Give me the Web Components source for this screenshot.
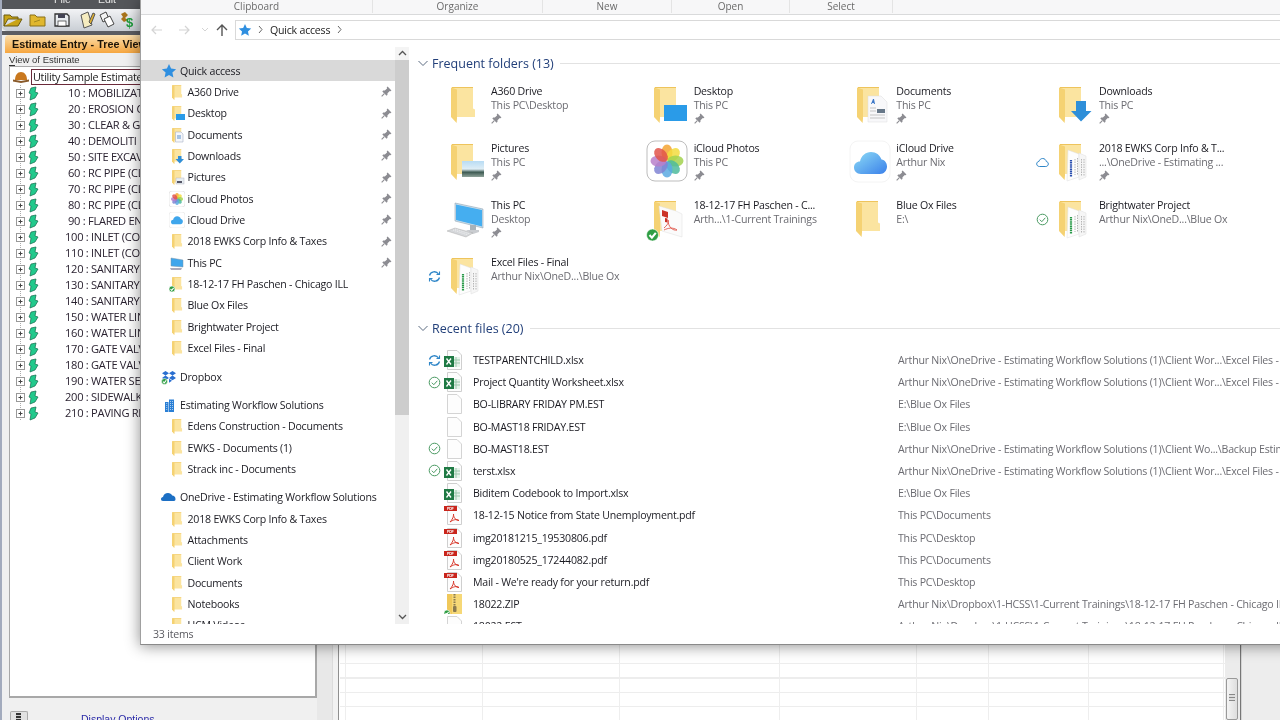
<!DOCTYPE html>
<html><head><meta charset="utf-8"><title>Quick access</title>
<style>
html,body{margin:0;width:1280px;height:720px;overflow:hidden;background:#f0f0f0;font-family:"Open Sans","Liberation Sans",sans-serif}
body{position:relative;filter:blur(.35px)}
</style></head><body>
<estimate-app>
  <tree-row num="10 : MOBILIZAT"></tree-row><tree-row num="20 : EROSION C"></tree-row><tree-row num="30 : CLEAR &amp; G"></tree-row><tree-row num="40 : DEMOLITI"></tree-row><tree-row num="50 : SITE EXCAV"></tree-row><tree-row num="60 : RC PIPE (CL"></tree-row><tree-row num="70 : RC PIPE (CL"></tree-row><tree-row num="80 : RC PIPE (CL"></tree-row><tree-row num="90 : FLARED EN"></tree-row><tree-row wide num="100 : INLET (CO"></tree-row><tree-row wide num="110 : INLET (CO"></tree-row><tree-row wide num="120 : SANITARY"></tree-row><tree-row wide num="130 : SANITARY"></tree-row><tree-row wide num="140 : SANITARY"></tree-row><tree-row wide num="150 : WATER LIN"></tree-row><tree-row wide num="160 : WATER LIN"></tree-row><tree-row wide num="170 : GATE VALV"></tree-row><tree-row wide num="180 : GATE VALV"></tree-row><tree-row wide num="190 : WATER SEF"></tree-row><tree-row wide num="200 : SIDEWALK"></tree-row><tree-row wide num="210 : PAVING RE"></tree-row>
</estimate-app>
<explorer-window>
  <ribbon-labels slot="ribbon"></ribbon-labels>
  <address-bar slot="address"></address-bar>
  <nav-pane slot="nav">
    <nav-item icon="star" root selected>Quick access</nav-item>
    <nav-item icon="folder" pinned>A360 Drive</nav-item>
    <nav-item icon="desk" pinned>Desktop</nav-item>
    <nav-item icon="docs" pinned>Documents</nav-item>
    <nav-item icon="down" pinned>Downloads</nav-item>
    <nav-item icon="pics" pinned>Pictures</nav-item>
    <nav-item icon="photos" pinned>iCloud Photos</nav-item>
    <nav-item icon="cloud" pinned>iCloud Drive</nav-item>
    <nav-item icon="folder" pinned>2018 EWKS Corp Info &amp; Taxes</nav-item>
    <nav-item icon="pc" pinned>This PC</nav-item>
    <nav-item icon="foldercheck">18-12-17 FH Paschen - Chicago ILL</nav-item>
    <nav-item icon="folder">Blue Ox Files</nav-item>
    <nav-item icon="folder">Brightwater Project</nav-item>
    <nav-item icon="folder">Excel Files - Final</nav-item>
    <nav-item icon="dropbox" root group="8">Dropbox</nav-item>
    <nav-item icon="building" root group="6.400">Estimating Workflow Solutions</nav-item>
    <nav-item icon="folder">Edens Construction - Documents</nav-item>
    <nav-item icon="folder">EWKS - Documents (1)</nav-item>
    <nav-item icon="folder">Strack inc - Documents</nav-item>
    <nav-item icon="onedrive" root group="7.200">OneDrive - Estimating Workflow Solutions</nav-item>
    <nav-item icon="folder">2018 EWKS Corp Info &amp; Taxes</nav-item>
    <nav-item icon="folder">Attachments</nav-item>
    <nav-item icon="folder">Client Work</nav-item>
    <nav-item icon="folder">Documents</nav-item>
    <nav-item icon="folder">Notebooks</nav-item>
    <nav-item icon="folder">UCM Videos</nav-item>
  </nav-pane>
  <section-head slot="main">Frequent folders (13)</section-head>
  <tile-grid slot="main">
    <folder-tile icon="folder" name="A360 Drive" sub="This PC\Desktop" pinned></folder-tile>
    <folder-tile icon="desk" name="Desktop" sub="This PC" pinned></folder-tile>
    <folder-tile icon="docs" name="Documents" sub="This PC" pinned></folder-tile>
    <folder-tile icon="down" name="Downloads" sub="This PC" pinned></folder-tile>
    <folder-tile icon="pics" name="Pictures" sub="This PC" pinned></folder-tile>
    <folder-tile icon="photos" name="iCloud Photos" sub="This PC" pinned></folder-tile>
    <folder-tile icon="cloud" name="iCloud Drive" sub="Arthur Nix" pinned></folder-tile>
    <folder-tile icon="blue" status="cloud" name="2018 EWKS Corp Info &amp; T..." sub="...\OneDrive - Estimating ..." pinned></folder-tile>
    <folder-tile icon="pc" name="This PC" sub="Desktop" pinned></folder-tile>
    <folder-tile icon="pdf" name="18-12-17 FH Paschen - C..." sub="Arth...\1-Current Trainings"></folder-tile>
    <folder-tile icon="folder" name="Blue Ox Files" sub="E:\"></folder-tile>
    <folder-tile icon="green" status="check" name="Brightwater Project" sub="Arthur Nix\OneD...\Blue Ox"></folder-tile>
    <folder-tile icon="green" status="sync" name="Excel Files - Final" sub="Arthur Nix\OneD...\Blue Ox"></folder-tile>
  </tile-grid>
  <section-head slot="main" recent>Recent files (20)</section-head>
  <file-list slot="main">
    <file-row icon="xls" status="sync" path="Arthur Nix\OneDrive - Estimating Workflow Solutions (1)\Client Wor...\Excel Files - Final">TESTPARENTCHILD.xlsx</file-row>
    <file-row icon="xls" status="check" path="Arthur Nix\OneDrive - Estimating Workflow Solutions (1)\Client Wor...\Excel Files - Final">Project Quantity Worksheet.xlsx</file-row>
    <file-row icon="doc" path="E:\Blue Ox Files">BO-LIBRARY FRIDAY PM.EST</file-row>
    <file-row icon="doc" path="E:\Blue Ox Files">BO-MAST18 FRIDAY.EST</file-row>
    <file-row icon="doc" status="check" path="Arthur Nix\OneDrive - Estimating Workflow Solutions (1)\Client Wo...\Backup Estimates">BO-MAST18.EST</file-row>
    <file-row icon="xls" status="check" path="Arthur Nix\OneDrive - Estimating Workflow Solutions (1)\Client Wor...\Excel Files - Final">terst.xlsx</file-row>
    <file-row icon="xls" path="E:\Blue Ox Files">Biditem Codebook to Import.xlsx</file-row>
    <file-row icon="pdffile" path="This PC\Documents">18-12-15 Notice from State Unemployment.pdf</file-row>
    <file-row icon="pdffile" path="This PC\Desktop">img20181215_19530806.pdf</file-row>
    <file-row icon="pdffile" path="This PC\Documents">img20180525_17244082.pdf</file-row>
    <file-row icon="pdffile" path="This PC\Desktop">Mail - We're ready for your return.pdf</file-row>
    <file-row icon="zip" path="Arthur Nix\Dropbox\1-HCSS\1-Current Trainings\18-12-17 FH Paschen - Chicago ILL">18022.ZIP</file-row>
    <file-row icon="doc" path="Arthur Nix\Dropbox\1-HCSS\1-Current Trainings\18-12-17 FH Paschen - Chicago ILL">18022.EST</file-row>
  </file-list>
  <span slot="status">33 items</span>
</explorer-window>
<script>
const folder=(x,y,s=1)=>`<g transform="translate(${x} ${y}) scale(${s})"><path fill="#fbe4a0" d="M1 0H22V21.5L24 22.5V30H1Z"/><path fill="#f5d273" d="M0 .4 6 2.5V31.5L5.6 36 0 30Z"/><path fill="#eec45c" d="M1 0H22V1H1Z"/></g>`;
const chk=(cx,cy,r)=>`<circle cx="${cx}" cy="${cy}" r="${r}" fill="#2f9e44" stroke="#fff" stroke-width=".6"/><path d="M${cx-r*.5} ${cy}l${r*.4} ${r*.45} ${r*.65}-${r*.8}" fill="none" stroke="#fff" stroke-width="${r*.35}"/>`;
const flower=(cx,cy,rx,ry,d)=>['#f4a433','#f2dc3e','#a3d24f','#4dbb9c','#5aa9e2','#8084d4','#b87fca','#e2544a'].map((c,i)=>`<ellipse cx="${cx}" cy="${cy-d}" rx="${rx}" ry="${ry}" fill="${c}" fill-opacity=".85" transform="rotate(${i*45} ${cx} ${cy})"/>`).join('');
const cloudPath=(f)=>`<path fill="${f}" d="M7 23C2.500 23 0 20 0 16.500 0 13 2.500 10.500 6 10.500 7 5 11.500 1 17 1c5 0 9 3 10.500 7.500C31 9 33 12 33 15.500 33 19.500 30 23 26 23Z"/>`;
const sheets=(c)=>`<path fill="#fdfdfd" stroke="#dedede" stroke-width=".5" d="M17 10 28 14V37L16 41Z"/><path fill="#f6f6f6" stroke="#dedede" stroke-width=".5" d="M28 13 35 16V37L28 40Z"/><path fill="none" stroke="#b5b5b5" stroke-width="1" stroke-dasharray="1.500 1" d="M24 19V35M26.500 18V35M30.500 19V36M33 19V36"/><path stroke="${c}" stroke-width="2.200" stroke-dasharray="1.500 .6" d="M20 20V37" fill="none"/>`;
const T={
 folder:folder(8,4),
 desk:folder(8,4)+`<rect x="18" y="22" width="23" height="16" fill="#2a9be8"/>`,
 docs:folder(9,4)+`<path fill="#f8f8fa" stroke="#dcdcdc" stroke-width=".5" d="M20 13H33L39 19V39H20Z"/><path fill="#3d78c8" d="M23 21l2-5h1l1 5h-1l-.3-1h-1.400l-.4 1Z"/><rect x="29" y="26" width="8" height="4" fill="#678"/><path stroke="#c4c4c4" d="M22 25H28M22 28H28M22 32H37M22 35H37" fill="none"/>`,
 down:folder(8,4)+`<path fill="#2f8fd9" d="M25 18H35V28H40.500L30 38.500 20 28H25Z"/>`,
 pics:folder(8,4)+`<defs><linearGradient id="sky" x2="0" y2="1"><stop offset="0" stop-color="#b8dcf4"/><stop offset=".5" stop-color="#dfeef6"/><stop offset=".7" stop-color="#3d5a52"/><stop offset="1" stop-color="#8fa39a"/></linearGradient></defs><rect x="19" y="21" width="22" height="16" fill="url(#sky)"/>`,
 photos:`<rect x="1" y="1" width="40" height="40" rx="8" fill="#fff" stroke="#bdbdbd"/>`+flower(21,21,5.500,8,8.500),
 cloud:`<rect x="2" y="1" width="40" height="41" rx="8" fill="#fff" stroke="#f4f4f4"/><defs><linearGradient id="cl" x1="0" y1="0" x2="1" y2="1"><stop offset="0" stop-color="#8ddcf6"/><stop offset="1" stop-color="#3a80ea"/></linearGradient></defs><g transform="translate(6 11)">${cloudPath('url(#cl)')}</g>`,
 blue:folder(8,4)+sheets('#2a4fb0'),
 green:folder(8,4)+sheets('#2a9a4a'),
 pc:`<path fill="#cfe0ec" stroke="#7f97a8" stroke-width=".5" d="M12 6 40 12V31L12 24Z"/><path fill="#45aef0" d="M13 7.500 39 13V29.500L13 23Z"/><path fill="#a9b2b8" d="M27 28H33V33H27Z"/><path fill="#c9ccd0" d="M23 33H36V35L30 37Z"/><path fill="#d5d7da" stroke="#a0a0a0" stroke-width=".4" d="M12 31 30 36 23 40 4 34Z"/><path stroke="#fff" stroke-width=".6" stroke-dasharray="1 1" d="M10 33 25 38M12 32 27 37" fill="none"/>`,
 pdf:folder(8,4)+`<path fill="#fbfbfb" stroke="#dedede" stroke-width=".5" d="M13 9 30 14 36 17V40L16 34Z"/><path fill="#cc3327" d="M16 13l6 2V21L16 19ZM19 21l2.500 .5v4L19 25Z"/><path fill="none" stroke="#e0574c" stroke-width=".9" d="M18 31C24 26 22 23 22 23 22 30 27 34 31 33 27 30 22 31 18 33"/>`+chk(6.500,38,6),
 xls:`<path fill="#fdfdfd" stroke="#cfcfcf" d="M3.500 .5H13L17.500 5V19.500H3.500Z"/><path fill="#e6f2ea" d="M9 7H16V17H9Z"/><path stroke="#9bc8ab" d="M9 10H16M9 13H16M12 7V17" fill="none"/><path fill="#1f7a44" d="M0 6H10V17H0Z"/><path stroke="#fff" stroke-width="1.300" d="M2.500 8.500 7 14.500M7 8.500 2.500 14.500" fill="none"/>`,
 doc:`<path fill="#fdfdfd" stroke="#d4d4d4" d="M3.500 .5H13L17.500 5V19.500H3.500Z"/>`,
 pdffile:`<path fill="#fdfdfd" stroke="#cfcfcf" d="M3.500 .5H13L17.500 5V19.500H3.500Z"/><path fill="#c9251c" d="M0 1H13V6H0Z"/><text x="3" y="5" font-size="3.600" font-weight="700" fill="#fff" font-family="Liberation Sans">PDF</text><path fill="none" stroke="#d8372a" stroke-width="1" d="M6 17C10 13 9.500 9 9.500 9 9.500 13 12 15.500 15 15.500 12.500 13.500 9 15 6 17Z"/>`,
 zip:`<path fill="#f6d877" d="M3 0H18V20H3Z"/><path fill="#f0c85a" d="M3 0H8V20H3Z"/><path stroke="#8a7a50" stroke-width="2" stroke-dasharray="1.500 1" d="M10.500 0V12" fill="none"/><rect x="9" y="12" width="3.500" height="6" rx="1" fill="#8a7a50"/>`+chk(3,19,3),
};
const S={
 star:`<path fill="#2f8fe0" d="M8 1l2.100 4.600 5 .6-3.700 3.400 1 5L8 12.100 3.600 14.600l1-5L.9 6.200l5-.6Z"/>`,
 folder:folder(3,1,.42),
 desk:folder(3,1,.42)+`<rect x="7" y="9" width="9" height="6" fill="#2a9be8"/>`,
 docs:folder(3,1,.42)+`<path fill="#f4f6fa" stroke="#a9b4c6" stroke-width=".6" d="M6.500 5H12L14 7V15H6.500Z"/><path stroke="#5a90cc" d="M8 9H12M8 11H12" fill="none"/>`,
 down:folder(3,1,.42)+`<path fill="#2f8fd9" d="M9 8H12.500V11H15L10.800 15.500 6.500 11H9Z"/>`,
 pics:folder(3,1,.42)+`<rect x="7" y="9" width="8" height="6" fill="#e8eef2" stroke="#aab" stroke-width=".4"/><rect x="8" y="12" width="5" height="2" fill="#556"/>`,
 photos:`<rect x="0" y="0" width="16" height="16" rx="3" fill="#fff" stroke="#e8e8e8"/>`+flower(8,8,2,3,3),
 cloud:`<rect x="0" y="0" width="16" height="16" rx="3" fill="#fff" stroke="#eee"/><g transform="translate(2 4) scale(.36)">${cloudPath('#3fa6ec')}</g>`,
 pc:`<path fill="#3fa6ec" stroke="#7a95a8" stroke-width=".5" d="M2 3 14 5V12L2 11Z"/><path fill="#aab" d="M1 13H13L12 15H2Z"/>`,
 foldercheck:folder(3,1,.42)+chk(3,13,3),
 dropbox:`<path fill="#2a6fd0" d="M4.500 2 8 4.300 4.500 6.600 1 4.300ZM11.500 2 15 4.300 11.500 6.600 8 4.300ZM4.500 6.600 8 8.900 4.500 11.200 1 8.900ZM11.500 6.600 15 8.900 11.500 11.200 8 8.900Z"/><path fill="#2a6fd0" d="M8 9.800l3 2-3 2Z"/>`+chk(3.500,12.500,3),
 building:`<path fill="#2a7fd5" d="M4 5H7.500V15H4ZM8 2.500h5V15H8Z"/><path stroke="#fff" stroke-width=".6" stroke-dasharray="1 1" d="M5.700 6V14M9.500 4V14M11.500 4V14" fill="none"/>`,
 onedrive:`<path fill="#1c6fc4" d="M2 12C.5 12 0 11 0 10 0 9 .8 8.200 2 8 2.500 5.500 4.500 4 7 4 9 4 10.500 5 11.200 6.500 13 6.500 14.500 8 14.500 10 14.500 11 14 12 13 12Z"/>`,
};
const ST={
 check:`<svg width="13" height="13" viewBox="0 0 13 13"><circle cx="6.500" cy="6.500" r="5.300" fill="none" stroke="#4a9a62" stroke-width="1"/><path d="M3.800 6.700 5.800 8.700 9.300 4.800" fill="none" stroke="#4a9a62" stroke-width="1"/></svg>`,
 sync:`<svg width="13" height="13" viewBox="0 0 13 13"><path d="M1.500 5.500A5 5 0 0 1 10.500 4M11.500 7.500A5 5 0 0 1 2.500 9" fill="none" stroke="#2f86c8" stroke-width="1.300"/><path d="M8.500 4.500H11.500V1.500M4.500 8.500H1.500V11.500" fill="none" stroke="#2f86c8" stroke-width="1.100"/></svg>`,
 cloud:`<svg width="13" height="13" viewBox="0 0 13 13"><path d="M3.500 10.500C1.800 10.500.7 9.300.7 7.900.7 6.500 1.800 5.500 3 5.400 3.500 3.500 5 2.500 6.700 2.500 8.500 2.500 10 3.800 10.300 5.500 11.500 5.700 12.300 6.700 12.300 8 12.300 9.400 11.200 10.500 9.800 10.500Z" fill="none" stroke="#2f86c8"/></svg>`
};
const PIN=`<svg width="11" height="11" viewBox="0 0 10 10"><path fill="#8c8c92" d="M6 .5 9.500 4 8.700 4.800 8 4.500 5.900 6.500V8L5.100 8.800 1.200 5 2 4.200H3.500L5.500 2.200 5.200 1.300Z"/><path stroke="#8c8c92" d="M3 7 .6 9.400"/></svg>`;
const shadow=(el,html)=>{el.attachShadow({mode:'open'}).innerHTML=html;};
const def=(n,fn)=>customElements.define(n,class extends HTMLElement{connectedCallback(){if(!this.shadowRoot)fn(this);}});

def('estimate-app',e=>shadow(e,`<style>
:host{display:grid;grid-template-columns:317px 23px 885px 16px 1fr;width:1280px;height:720px;background:#ececec;color:#222}
.left{display:flex;flex-direction:column;min-width:0;background:#f0f0f0;border-left:2px solid #a3abbd;box-sizing:border-box;position:relative}
.menu{height:9px;background:#54565a;color:#e8e8e8;font:10.500px "Liberation Sans",sans-serif;display:flex;gap:27px;padding-left:52px;overflow:hidden}
.menu span{margin-top:-7px}
.tools{height:22px;background:linear-gradient(#f2f3f5,#c9ced4);border-radius:5px 0 0 5px;display:flex;align-items:center;padding-left:1px}
.band{height:4px;background:#5b5d62}
.tab{height:18px;margin-left:3px;background:linear-gradient(#fce0ae,#f6a63f);border-radius:4px 0 0 0;font:bold 10.800px "Liberation Sans",sans-serif;color:#1c1408;display:flex;align-items:center;padding-left:7px;white-space:nowrap}
.view{height:13px;font:9.500px/14px "Liberation Sans",sans-serif;color:#333;padding-left:7px}
.view u{text-decoration:none;border-bottom:1px solid #333}
.tree{height:632px;width:308px;margin-left:7px;box-sizing:border-box;background:#fff;border:1px solid #a8a8a8;border-right-width:2px;border-bottom-width:2px;padding-top:2px;overflow:hidden}
.root{display:flex;align-items:center;height:16px}
.root svg{margin:0 3px 0 3px}
.root span{border:1px solid #6b2a3a;font:10.800px/14px "Open Sans",sans-serif;padding:0 1px;white-space:nowrap;letter-spacing:-.28px;margin-left:-1px}
.foot{flex:1;position:relative;display:flex;align-items:flex-end}
.btn{width:18px;height:9px;margin-left:8px;background:#e2e2e2;border:1px solid #aaa;border-bottom:0;border-radius:2px 2px 0 0;box-sizing:border-box;padding:1px 0 0 5px}
.btn::after{content:"";display:block;width:5px;height:7px;background:repeating-linear-gradient(#333 0 2px,#ccc 2px 3px)}
.disp{margin-left:53px;font:10.500px/9px "Liberation Sans",sans-serif;color:#2a2aa8;height:5px;overflow:hidden;white-space:nowrap}
.gut{background:linear-gradient(90deg,#e8e8e8 0 15px,#dcdcdc 15px 16px,#f2f2f2 16px 21px,#8f8f8f 21px 22px,#fff 22px)}
.grid{background:repeating-linear-gradient(#fff 0 13px,#ededed 13px 14.300px) 0 650px no-repeat,#fff;position:relative}
.grid i{position:absolute;top:640px;bottom:0;width:1px;background:#eeeeee}
.sb{background:#ececec;position:relative;border-right:1px solid #777;box-sizing:border-box}
.thumb{position:absolute;left:1px;right:2px;top:678px;height:42px;background:linear-gradient(90deg,#f4f4f4,#dedede);border:1px solid #999;box-sizing:border-box;border-radius:2px}
.thumb::after{content:"";position:absolute;left:2px;right:2px;top:15px;height:7px;background:repeating-linear-gradient(#888 0 1px,#ddd 1px 3px)}
.r{background:#ededed;border-left:1px solid #d4d4d4}
</style>
<div class="left">
 <div class="menu"><span>File</span><span>Edit</span></div>
 <div class="tools">
  <svg width="20" height="16" viewBox="0 0 20 16"><path fill="#c9a417" stroke="#6a5a10" d="M1 14V3H7L9 5H15V7H5L1 14H15L19 7H15"/></svg>
  <svg width="22" height="16" viewBox="0 0 22 16" style="margin-left:4px"><path fill="#e0b72e" stroke="#8a7018" d="M3 14V3H8L10 5H18V14Z"/><path stroke="#a58a20" d="M7 10 13 8"/></svg>
  <svg width="18" height="16" viewBox="0 0 18 16" style="margin-left:4px"><path fill="#e8ecf0" stroke="#333" stroke-width="1.300" d="M2 2H14L16 4V14H2Z"/><rect x="5" y="2" width="7" height="4" fill="#445"/><rect x="5" y="9" width="8" height="5" fill="#fff" stroke="#333" stroke-width=".7"/></svg>
  <svg width="18" height="18" viewBox="0 0 18 18" style="margin-left:7px"><path fill="#f5ecc0" stroke="#555" d="M3 4 10 1 14 14 6 17Z"/><path fill="#e0b030" stroke="#555" d="M11 11 15 2 17 3 13 13Z"/></svg>
  <svg width="18" height="18" viewBox="0 0 18 18" style="margin-left:2px"><path fill="#f4f4f4" stroke="#444" d="M2 4 8 1 11 8 5 11Z"/><path fill="#fff" stroke="#444" d="M6 8 12 5 16 13 10 16Z"/></svg>
  <svg width="16" height="18" viewBox="0 0 16 18" style="margin-left:3px"><path fill="#a8741c" d="M2 3 6 1 9 4 6 7 9 9 5 11 2 8 4 6Z"/><text x="7" y="16" font-size="13" font-weight="700" fill="#1e9a3c" font-family="Liberation Sans">$</text></svg>
 </div>
 <div class="band"></div>
 <div class="tab">Estimate Entry - Tree View</div>
 <div class="view"><u>V</u>iew of Estimate</div>
 <div class="tree">
  <div class="root"><svg width="16" height="12" viewBox="0 0 16 12"><path fill="#c9781e" d="M2 9C2 4 4.500 1 8 1s6 3 6 8Z"/><path fill="#8a5a2a" d="M0 8.500 8 10 16 8.500V10.500L8 12 0 10.500Z"/></svg><span>Utility Sample Estimate</span></div>
  <slot></slot>
 </div>
 <div class="foot"><div class="btn"></div><div class="disp">Display Options</div></div>
</div>
<div class="gut"></div>
<div class="grid"><i style="left:5px"></i><i style="left:142px"></i><i style="left:279px"></i><i style="left:439px"></i><i style="left:576px"></i><i style="left:648px"></i><i style="left:748px"></i><i style="left:883px"></i></div>
<div class="sb"><div class="thumb"></div></div>
<div class="r"></div>`));

def('tree-row',e=>shadow(e,`<style>
:host{display:flex;align-items:center;height:16px;white-space:nowrap;font:11.100px "Open Sans",sans-serif;color:#2a2230;letter-spacing:-.28px}
svg{flex:none}
span{margin-left:${e.hasAttribute('wide')?'25px':'28px'};margin-top:-2px}
</style>
<svg width="30" height="16" viewBox="0 0 30 16"><path stroke="#aaa" stroke-dasharray="1 1" d="M10.500 0V16" fill="none"/><rect x="6.500" y="4.500" width="8" height="8" fill="#fff" stroke="#999"/><path stroke="#444" d="M8.500 8.500H12.500M10.500 6.500V10.500" fill="none"/><path fill="#22c98c" stroke="#166a4c" stroke-width=".7" d="M21 3 26 2 25 7 28 8 25 13 20 15 21 9 19 8Z"/></svg>
<span>${e.getAttribute('num').replace(/&/g,'&amp;')}</span>`));

def('explorer-window',e=>shadow(e,`<style>
:host{position:absolute;left:140px;top:0;width:1180px;height:645px;background:#fff;border-left:1px solid #a0a0a0;border-bottom:1px solid #8a8a8a;box-shadow:0 1px 14px rgba(0,0,0,.45);display:flex;flex-direction:column;box-sizing:border-box;color:#1b1b22;font:10.600px "Open Sans",sans-serif;letter-spacing:-.22px}
.body{height:578px;display:flex;overflow:hidden}
.main{flex:1;min-width:0;padding-top:7px;height:571px;overflow:hidden}
.status{height:20px;display:flex;align-items:center;padding-left:12px;color:#5a5a60}
</style>
<slot name="ribbon"></slot><slot name="address"></slot>
<div class="body"><slot name="nav"></slot><div class="main"><slot name="main"></slot></div></div>
<div class="status"><slot name="status"></slot></div>`));

def('ribbon-labels',e=>shadow(e,`<style>
:host{display:grid;grid-template-columns:232px 170px 129px 118px 103px 1fr;height:15px;box-sizing:border-box;background:#f7f7f8;border-bottom:1px solid #d9dadb;font-size:10px;color:#6a6a6a;line-height:12px;letter-spacing:0}
span{text-align:center;border-right:1px solid #e4e4e4;height:13px}
span:last-child{border:0}
</style><span>Clipboard</span><span>Organize</span><span>New</span><span>Open</span><span>Select</span><span></span>`));

def('address-bar',e=>shadow(e,`<style>
:host{display:flex;align-items:center;height:32px;padding-bottom:2px;box-sizing:border-box;background:#fff}
.arr{display:flex;align-items:center;width:94px;flex:none}
.box{flex:1;height:20px;border:1px solid #d9d9d9;box-sizing:border-box;display:flex;align-items:center;padding-left:2px;gap:4px;color:#222}
</style>
<div class="arr">
<svg width="14" height="12" viewBox="0 0 14 12" style="margin-left:9px"><path d="M12 6H2M6 2 2 6 6 10" fill="none" stroke="#d4d4d4" stroke-width="1.200"/></svg>
<svg width="14" height="12" viewBox="0 0 14 12" style="margin-left:13px"><path d="M2 6H12M8 2 12 6 8 10" fill="none" stroke="#d4d4d4" stroke-width="1.200"/></svg>
<svg width="8" height="6" viewBox="0 0 8 6" style="margin-left:10px"><path d="M1 1 4 4 7 1" fill="none" stroke="#d4d4d4"/></svg>
<svg width="14" height="14" viewBox="0 0 14 14" style="margin-left:6px"><path d="M7 13V2M2 7 7 2 12 7" fill="none" stroke="#555" stroke-width="1.400"/></svg>
</div>
<div class="box"><svg width="14" height="14" viewBox="0 0 16 16">${S.star}</svg>
<svg width="7" height="9" viewBox="0 0 7 9" style="margin-left:1px"><path d="M2 1 5 4.500 2 8" fill="none" stroke="#666"/></svg>
<span style="margin-left:2px">Quick access</span>
<svg width="7" height="9" viewBox="0 0 7 9" style="margin-left:2px"><path d="M2 1 5 4.500 2 8" fill="none" stroke="#666"/></svg></div>`));

def('nav-pane',e=>shadow(e,`<style>
:host{display:flex;width:269px;flex:none;height:578px}
.list{flex:1;min-width:0;padding-top:13px;height:565px;overflow:hidden}
.sb{width:14px;background:#f0f0f0;position:relative;margin-right:1px;flex:none;height:577px}
.up,.dn{position:absolute;left:0;right:0;height:13px;background:#f0f0f0;display:flex;align-items:center;justify-content:center}
.up{top:0;background:#f4f4f4}.dn{bottom:0}
.th{position:absolute;left:0;right:0;top:13px;height:355px;background:#cdcdcd}
</style><div class="list"><slot></slot></div>
<div class="sb"><div class="up"><svg width="9" height="6" viewBox="0 0 9 6"><path d="M1 5 4.500 1.500 8 5" fill="none" stroke="#555" stroke-width="1.300"/></svg></div><div class="th"></div><div class="dn"><svg width="9" height="6" viewBox="0 0 9 6"><path d="M1 1 4.500 4.500 8 1" fill="none" stroke="#555" stroke-width="1.300"/></svg></div></div>`));

def('nav-item',e=>{
 const root=e.hasAttribute('root');
 shadow(e,`<style>
:host{display:flex;align-items:center;height:21.330px;padding-left:${root?20:28}px;white-space:nowrap;box-sizing:border-box;${e.hasAttribute('selected')?'background:#d9d9d9;':''}${e.hasAttribute('group')?`margin-top:${e.getAttribute('group')}px;`:''}}
svg.i{flex:none;margin-right:${root?3:2.500}px}
.p{margin-left:auto;margin-right:3px;height:11px}
</style><svg class="i" width="16" height="16" viewBox="0 0 16 16">${S[e.getAttribute('icon')]}</svg><slot></slot>${e.hasAttribute('pinned')?`<span class="p">${PIN}</span>`:''}`);
});

def('section-head',e=>shadow(e,`<style>
:host{display:flex;align-items:center;height:20px;padding-left:8px;font-size:12.500px;letter-spacing:0;color:#23407a;white-space:nowrap;${e.hasAttribute('recent')?'margin-top:7px;':''}}
svg{margin-right:4px;flex:none}
i{flex:1;height:1px;background:#e2e2e2;margin-left:6px}
</style><svg width="10" height="7" viewBox="0 0 10 7"><path d="M.5 1 5 5.500 9.500 1" fill="none" stroke="#5a6a80"/></svg><slot></slot><i></i>`));

def('tile-grid',e=>shadow(e,`<style>:host{display:grid;grid-template-columns:repeat(4,202.670px);grid-auto-rows:57px;margin:10px 0 0 17px;height:228px;}</style><slot></slot>`));

def('folder-tile',e=>{
 const st=e.getAttribute('status'),n=e.getAttribute('name'),esc=s=>s.replace(/&/g,'&amp;');
 shadow(e,`<style>
:host{display:flex;min-width:0;white-space:nowrap}
.s{width:16px;height:44px;flex:none;display:flex;align-items:center;justify-content:center;padding-right:1px;box-sizing:border-box}
svg.i{flex:none;margin-top:-1px;overflow:visible}
.t{line-height:14px}
.b{color:#6c6c72}
.p{height:14px;display:flex;align-items:center;}
</style><div class="s">${st?ST[st]:''}</div><svg class="i" width="48" height="44" viewBox="0 0 48 44">${T[e.getAttribute('icon')]}</svg>
<div class="t"><div>${esc(n)}</div><div class="b">${esc(e.getAttribute('sub'))}</div>${e.hasAttribute('pinned')?`<div class="p">${PIN}</div>`:''}</div>`);
});

def('file-list',e=>shadow(e,`<style>:host{display:block;margin:10px 0 0 17px}</style><slot></slot>`));

def('file-row',e=>{
 const st=e.getAttribute('status');
 shadow(e,`<style>
:host{display:flex;align-items:center;height:22.200px;white-space:nowrap}
.s{width:16px;flex:none;display:flex;justify-content:center;padding-right:1px;box-sizing:border-box}
svg.i{flex:none;margin:0 9px 0 1px}
.n{width:425px;flex:none}
.pth{color:#6c6c72}
</style><div class="s">${st?ST[st]:''}</div><svg class="i" width="20" height="20" viewBox="0 0 20 20">${T[e.getAttribute('icon')]}</svg>
<div class="n"><slot></slot></div><div class="pth">${e.getAttribute('path')}</div>`);
});
</script>
</body></html>
